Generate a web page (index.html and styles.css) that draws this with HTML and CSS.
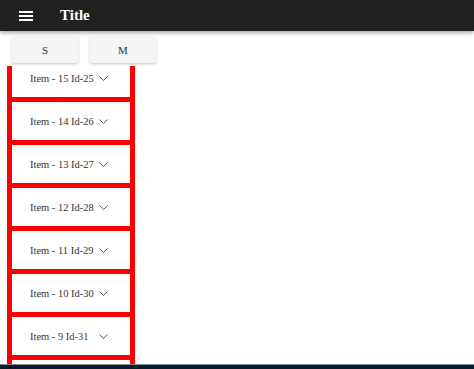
FILE: index.html
```html
<!DOCTYPE html>
<html>
<head>
<meta charset="utf-8">
<link rel="stylesheet" href="styles.css">
</head>
<body>
<div class="page">
  <header class="toolbar">
    <svg class="menu" width="14" height="10" viewBox="0 0 14 10"><rect x="0" y="0" width="14" height="2" fill="#fff"/><rect x="0" y="4" width="14" height="2" fill="#fff"/><rect x="0" y="8" width="14" height="2" fill="#fff"/></svg>
    <span class="title">Title</span>
  </header>
  <div class="buttons">
    <button class="btn">S</button>
    <button class="btn">M</button>
  </div>
  <div class="list">
    <div class="list-inner">
      <div class="item"><span class="label">Item - 15 Id-25</span><svg class="chev" width="9" height="5" viewBox="0 0 9 5"><path d="M0.5 0.5 L4.5 4.5 L8.5 0.5" fill="none" stroke="#555" stroke-width="1"/></svg></div>
      <div class="item"><span class="label">Item - 14 Id-26</span><svg class="chev" width="9" height="5" viewBox="0 0 9 5"><path d="M0.5 0.5 L4.5 4.5 L8.5 0.5" fill="none" stroke="#555" stroke-width="1"/></svg></div>
      <div class="item"><span class="label">Item - 13 Id-27</span><svg class="chev" width="9" height="5" viewBox="0 0 9 5"><path d="M0.5 0.5 L4.5 4.5 L8.5 0.5" fill="none" stroke="#555" stroke-width="1"/></svg></div>
      <div class="item"><span class="label">Item - 12 Id-28</span><svg class="chev" width="9" height="5" viewBox="0 0 9 5"><path d="M0.5 0.5 L4.5 4.5 L8.5 0.5" fill="none" stroke="#555" stroke-width="1"/></svg></div>
      <div class="item"><span class="label">Item - 11 Id-29</span><svg class="chev" width="9" height="5" viewBox="0 0 9 5"><path d="M0.5 0.5 L4.5 4.5 L8.5 0.5" fill="none" stroke="#555" stroke-width="1"/></svg></div>
      <div class="item"><span class="label">Item - 10 Id-30</span><svg class="chev" width="9" height="5" viewBox="0 0 9 5"><path d="M0.5 0.5 L4.5 4.5 L8.5 0.5" fill="none" stroke="#555" stroke-width="1"/></svg></div>
      <div class="item"><span class="label">Item - 9 Id-31</span><svg class="chev" width="9" height="5" viewBox="0 0 9 5"><path d="M0.5 0.5 L4.5 4.5 L8.5 0.5" fill="none" stroke="#555" stroke-width="1"/></svg></div>
      <div class="item-rest"></div>
    </div>
  </div>
  <div class="bottombar"></div>
</div>
</body>
</html>
```

FILE: styles.css
```css
html, body {
  margin: 0;
  padding: 0;
  background: #fff;
}
.page {
  width: 474px;
  height: 369px;
  display: flex;
  flex-direction: column;
  overflow: hidden;
  font-family: "Liberation Serif", "Times New Roman", serif;
}
.toolbar {
  height: 31px;
  flex: 0 0 31px;
  background: #212121;
  display: flex;
  align-items: center;
  padding-left: 19px;
  box-shadow: 0 2px 4px rgba(0,0,0,0.35);
  position: relative;
  z-index: 2;
}
.menu {
  display: block;
}
.title {
  color: #fff;
  font-weight: bold;
  font-size: 15px;
  margin-left: 27px;
}
.buttons {
  display: flex;
  gap: 12px;
  padding: 6px 0 0 12px;
  flex: 0 0 auto;
}
.btn {
  width: 66px;
  height: 26px;
  border: none;
  border-radius: 2px;
  background: #f5f5f5;
  box-shadow: 0 1px 3px rgba(0,0,0,0.25);
  font-family: "Liberation Serif", "Times New Roman", serif;
  font-size: 11px;
  color: #333;
  padding: 0;
}
.list {
  margin-top: 3px;
  margin-left: 7px;
  width: 128px;
  flex: 1 1 auto;
  overflow: hidden;
}
.list-inner {
  margin-top: -7px;
}
.item {
  height: 38px;
  border: 5px solid #ff0000;
  border-top: none;
  display: flex;
  align-items: center;
  padding-left: 18px;
  font-size: 10.5px;
  color: #333;
}
.item-rest {
  height: 20px;
  border-left: 5px solid #ff0000;
  border-right: 5px solid #ff0000;
}
.label {
  width: 69px;
  flex: 0 0 69px;
}
.chev {
  display: block;
  margin-top: 1px;
}
.bottombar {
  flex: 0 0 4px;
  height: 4px;
  background: #0b1a28;
  border-top: 1px solid #7d8a96;
}
```
